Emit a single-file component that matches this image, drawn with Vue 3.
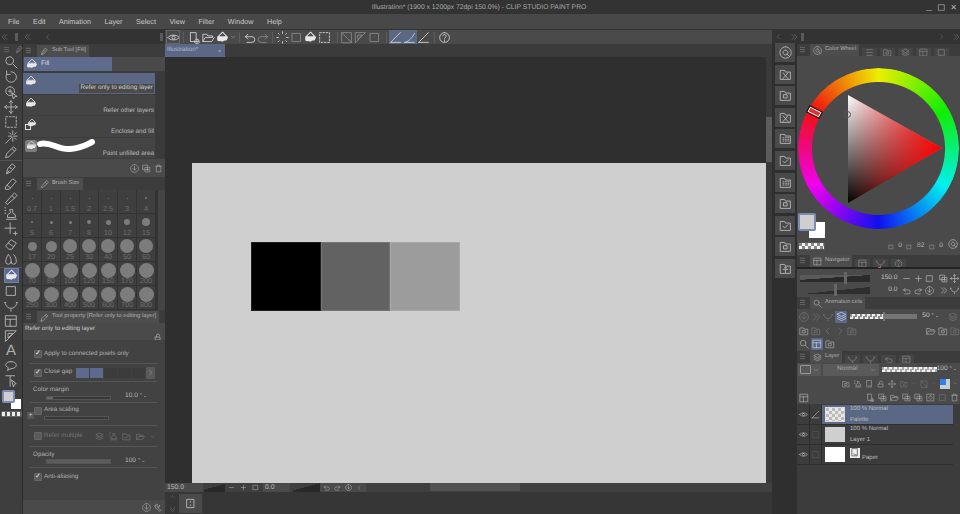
<script setup>
import { h } from 'vue'

const P = {
  zoom: 'M10 10l5 5M11 6.5a4.5 4.5 0 1 1-9 0a4.5 4.5 0 1 1 9 0',
  lasso: 'M8 2a6 6 0 1 1-5 3M3 1v4h4',
  hand: 'M7 2a5 5 0 1 0 0 10a5 5 0 1 0 0-10M7 5v4M5 7h4M9 9l6 4-3 .5-1 2.5z',
  move: 'M8 1v14M1 8h14M8 1L6 3M8 1l2 2M8 15l-2-2M8 15l2-2M1 8l2-2M1 8l2 2M15 8l-2-2M15 8l-2 2',
  marquee: 'M2 2h2M6 2h2M10 2h2M14 2v2M14 6v2M14 10v2M14 14h-2M10 14H8M6 14H4M2 14v-2M2 10V8M2 6V4',
  wand: 'M2 15l7-7M10 1v4M10 9v4M5 7h4M11 7h4M6 3l2 2M14 3l-2 2M14 11l-2-2',
  drop: 'M2 14l1-4 6-6 3 3-6 6zM9 4l2-2 3 3-2 2M2 14h0',
  pen: 'M3 13l1-5 5-6 4 3-5 6zM3 13l3-3M7 6a1 1 0 1 0 2 1',
  pencil: 'M2 11L10 2l4 3-8 9-4 0zM3.5 9.5l4 3',
  brush: 'M2 12l7-8 3 3-8 7zM9 4l3-3 3 3-3 3',
  stamp: 'M1 1h1M1 4h1M1 7h1M7 3h3v4l3 2v3H4V9l3-2zM3 14h11',
  spark: 'M7 1v12M1 7h12M13 11v4M11 13h4',
  eraser: 'M2 10l6-7 6 4-5 7H6zM5 7l6 4',
  blend: 'M5 3c3 3 3 5 3 8a3 3 0 0 1-6 0c0-3 1-5 3-8M11 3c3 3 3 5 3 8a3 3 0 0 1-6 0',
  curve: 'M1 4c2 9 12 9 14 0M1 4h1M14 4h1M8 12v2',
  frame: 'M2 2h12v12H2zM2 6h12M7 6v8',
  tri: 'M2 2h12L2 14zM5 5h5l-5 5z',
  balloon: 'M8 3c4 0 6 2 6 4s-2 4-6 4l-4 2 1-3C3 9 2 8 2 7c0-2 2-4 6-4z',
  pointer: 'M2 2h10M7 2v12M9 7l5 4-2 .5-1 3z',
  eye: 'M1 8c3-4 11-4 14 0c-3 4-11 4-14 0M8 6a2 2 0 1 1 0 4a2 2 0 1 1 0-4',
  pagePlus: 'M3 2h7v8M3 2v11h6M11 10a3 3 0 1 0 .1 0M11 11v4M9 13h4',
  folder: 'M1 13V4h5l1 2h6v2H4l-3 5h11l3-5',
  undo: 'M3 7h8a3 3 0 0 1 0 7H5M3 7l3-3M3 7l3 3',
  redo: 'M13 7H5a3 3 0 0 0 0 7h6M13 7l-3-3M13 7l-3 3',
  dotted: 'M8 1v2M8 13v2M1 8h2M13 8h2M3 3l1 1M12 12l1 1M3 13l1-1M12 4l1-1',
  square: 'M3 3h10v10H3z',
  chev: 'M4 6l4 4 4-4',
  left: 'M10 3L5 8l5 5',
  right: 'M6 3l5 5-5 5',
  dbl: 'M4 3l5 5-5 5M9 3l5 5-5 5',
  dblL: 'M12 3L7 8l5 5M7 3L2 8l5 5',
  dblD: 'M3 3l5 5 5-5M3 8l5 5 5-5',
  hatch: 'M2 2l12 12M2 14V2h12v12z',
  ruler: 'M2 14L14 2M2 14h12',
  ruler2: 'M2 14c5-1 9-5 12-11M2 14h12',
  help: 'M8 2a6 6 0 1 0 .1 0M6 6a2 2 0 1 1 3 2c-1 1-1 1-1 2M8 12v1',
  target: 'M8 1a7 7 0 1 0 .1 0M8 5a3 3 0 1 0 .1 0M10 10l3 3',
  boxX: 'M2 3h5l1 2h6v9H2zM5 6l6 7M11 6l-6 7',
  boxDoc: 'M2 3h5l1 2h6v9H2zM6 7h4v4H6z',
  boxCheck: 'M2 3h5l1 2h6v9H2zM5 9l2 2 4-4',
  boxDots: 'M2 3h5l1 2h6v9H2zM5 7h1M8 7h1M11 7h1M5 9h1M8 9h1M11 9h1M5 11h1M8 11h1M11 11h1',
  boxMan: 'M2 3h5l1 2h6v9H2zM8 6a1 1 0 1 0 .1 0M5 9h6M8 9v4',
  lines: 'M3 3h10M3 8h10M3 13h10',
  down: 'M8 1a7 7 0 1 0 .1 0M8 4v7M5 8l3 3 3-3',
  copy: 'M2 2h8v8H2zM6 6h8v8H6zM8 10h4M10 8v4',
  trash: 'M3 4h10M6 4V2h4v2M4 4v10h8V4',
  lock: 'M3 8h9v6H3zM5 8V5a3 3 0 0 1 6 0',
  wrench: 'M2 5a3 3 0 0 1 5-2L5 5l1 2 2-1 2-2c1 3-2 5-3 4l5 5-2 2-5-5C3 10 1 8 2 5z',
  layers: 'M8 2l6 3-6 3-6-3zM2 8l6 3 6-3M2 11l6 3 6-3',
  mask: 'M2 2h12v12H2zM8 5a3 3 0 1 0 .1 0',
  page: 'M4 1h9v13H4zM6 10l2 2 3 0',
  dots: 'M3 2h10v12H3zM8 5v1M8 10v1',
  minus: 'M3 8h10',
  winMin: 'M3 13h10',
  plus: 'M8 3v10M3 8h10'
}
const Ic = (props) =>
  h('svg', { width: props.s || 13, height: props.s || 13, viewBox: '0 0 16 16', fill: 'none', stroke: 'currentColor', 'stroke-width': props.w || 1.1, 'stroke-linejoin': 'round', 'stroke-linecap': 'round', class: 'ic' }, h('path', { d: P[props.n] }))
Ic.props = ['n', 's', 'w']

const Bucket = (props) =>
  h('svg', { width: props.s || 12, height: props.s || 12, viewBox: '0 0 16 16', class: 'ic' }, [
    h('path', { d: 'M8 1.5L13.5 7H2.5z', fill: 'none', stroke: '#e4e4e4', 'stroke-width': 1.3 }),
    h('path', { d: 'M1.5 7.5h13v1l-1.5 3c-1 .5-2 0-3 .5s-2 1.5-3 1-2-1-3-.5-2-.5-2.5-1z', fill: '#e8e8e8' })
  ])
Bucket.props = ['s']

const menu = ['File', 'Edit', 'Animation', 'Layer', 'Select', 'View', 'Filter', 'Window', 'Help']
const tools1 = ['zoom', 'lasso', 'hand', 'move', 'marquee', 'wand', 'drop']
const tools2 = ['pen', 'pencil', 'brush', 'stamp', 'spark', 'eraser', 'blend']
const tools3 = ['square', 'curve', 'frame', 'tri']
const subs = [
  { t: 'Refer only to editing layer', active: true },
  { t: 'Refer other layers' },
  { t: 'Enclose and fill', boxed: true },
  { t: 'Paint unfilled area', stroke: true }
]
const sizes = [
  ['0.7', 1], ['1', 1], ['1.5', 1], ['2', 1], ['2.5', 1], ['3', 1], ['4', 2],
  ['5', 2], ['6', 3], ['7', 3], ['8', 4], ['10', 5], ['12', 6], ['15', 8],
  ['17', 9], ['20', 11], ['25', 14], ['30', 14], ['40', 14], ['50', 14], ['60', 14],
  ['70', 15], ['80', 15], ['100', 15], ['120', 15], ['150', 15], ['170', 15], ['200', 15],
  ['250', 15], ['300', 15], ['400', 15], ['500', 15], ['600', 15], ['700', 15], ['800', 15]
]
const strip = ['target', 'boxX', 'boxDoc', 'boxX', 'boxDots', 'boxCheck', 'boxDots', 'boxDoc', 'boxCheck', 'boxDoc', 'boxMan']
const layers = [
  { a: '100 % Normal', b: 'Palette', sel: true, kind: 'checker' },
  { a: '100 % Normal', b: 'Layer 1', kind: 'grey' },
  { b: 'Paper', kind: 'white', paper: true }
]
</script>

<template>
  <div class="app">
    <header class="title">Illustration* (1900 x 1200px 72dpi 150.0%)  - CLIP STUDIO PAINT PRO
      <span class="win"><Ic n="winMin" :s="8" /><Ic n="square" :s="9" /><span class="x">✕</span></span>
    </header>
    <nav class="menu"><span v-for="m in menu" :key="m">{{ m }}</span></nav>

    <div class="main">
      <aside class="left">
        <div class="dock">
          <Ic n="dblL" :s="8" /><i class="grip"></i><Ic n="dblL" :s="8" /><Ic n="left" :s="8" class="push" /><i class="grip end"></i>
        </div>
        <div class="left-body">
          <div class="tools">
            <div class="tool-head"><Ic n="lines" :s="7" /><Ic n="pen" :s="9" /></div>
            <div class="tool-group">
              <span v-for="t in tools1" :key="t" class="tool"><Ic :n="t" :s="14" /></span>
            </div>
            <div class="tool-group sep">
              <span v-for="t in tools2" :key="t" class="tool"><Ic :n="t" :s="14" /></span>
            </div>
            <div class="tool-group sep">
              <span class="tool on"><Bucket :s="13" /></span>
              <span v-for="t in tools3" :key="t" class="tool"><Ic :n="t" :s="14" /></span>
              <span class="tool big">A</span>
              <span class="tool"><Ic n="balloon" :s="14" /></span>
              <span class="tool"><Ic n="pointer" :s="14" /></span>
            </div>
            <div class="colors">
              <i class="main-col"></i><i class="sub-col"></i>
            </div>
            <div class="wave"></div>
          </div>

          <div class="panels">
            <section class="sub">
              <div class="tabs"><Ic n="lines" :s="7" /><span class="tab"><Ic n="pen" :s="9" />Sub Tool [Fill]</span></div>
              <div class="group-row"><span class="group on"><Bucket :s="12" />Fill</span></div>
              <div class="sub-wrap">
                <ul class="sublist">
                  <li v-for="s in subs" :key="s.t" :class="{ on: s.active }">
                    <span v-if="s.boxed" class="boxed-ic"><Bucket :s="10" /></span>
                    <span v-else-if="s.stroke" class="paint-ic"><Bucket :s="11" /></span>
                    <Bucket v-else :s="12" />
                    <svg v-if="s.stroke" class="stroke" width="68" height="14" viewBox="0 0 68 14"><path d="M11 5c10-3 18 6 30 5s16-4 22-7" stroke="#fff" stroke-width="6" fill="none" stroke-linecap="round" /></svg>
                    <span class="sublabel">{{ s.t }}</span>
                  </li>
                </ul>
                <div class="vscroll"></div>
              </div>
              <div class="sub-foot"><Ic n="down" :s="9" /><Ic n="copy" :s="9" /><Ic n="trash" :s="9" /></div>
            </section>

            <section class="size">
              <div class="tabs"><Ic n="lines" :s="7" /><span class="tab"><Ic n="brush" :s="9" />Brush Size</span></div>
              <div class="size-wrap">
                <div class="size-grid">
                  <div v-for="c in sizes" :key="c[0]" class="cell">
                    <span class="dotbox"><i class="dot" :style="{ width: c[1] + 'px', height: c[1] + 'px' }"></i></span>
                    <span class="num">{{ c[0] }}</span>
                  </div>
                </div>
                <div class="vscroll short"></div>
              </div>
            </section>

            <section class="prop">
              <div class="tabs"><Ic n="lines" :s="7" /><span class="tab wide"><Ic n="drop" :s="9" />Tool property [Refer only to editing layer]</span></div>
              <div class="prop-head"><span>Refer only to editing layer</span><Ic n="lock" :s="8" /></div>
              <div class="prop-body">
                <div class="prow r-apply"><i class="chk on">✓</i>Apply to connected pixels only</div>
                <div class="prow r-gap"><i class="chk on">✓</i><span class="gap-label">Close gap</span>
                  <span class="gaps"><b class="b"></b><b class="b"></b><b></b><b></b><b></b><em><Ic n="right" :s="7" /></em></span>
                </div>
                <div class="pcol r-margin">
                  <span class="plabel">Color margin</span>
                  <div class="pline"><span class="track"><i></i></span><span class="val">10.0<small>⌃⌄</small></span></div>
                </div>
                <div class="prow r-area"><i class="plusb">+</i><i class="chk"></i><div class="stack"><span>Area scaling</span><span class="track"></span></div></div>
                <div class="prow r-multi"><i class="chk"></i><span class="dim multi-label">Refer multiple</span>
                  <span class="refs"><Ic n="layers" :s="9" /><Ic n="stamp" :s="9" /><Ic n="boxCheck" :s="9" /><Ic n="folder" :s="9" /><Ic n="chev" :s="7" /></span>
                </div>
                <div class="pcol r-opacity">
                  <span class="plabel">Opacity</span>
                  <div class="pline"><span class="track fillt"></span><span class="val">100<small>⌃⌄</small></span></div>
                </div>
                <div class="prow r-aa nobd"><i class="chk on">✓</i>Anti-aliasing</div>
              </div>
              <div class="prop-foot"><Ic n="down" :s="9" /><Ic n="wrench" :s="9" /></div>
            </section>
          </div>
        </div>
      </aside>

      <main class="center">
        <div class="toolbar">
          <span class="tb boxed"><Ic n="eye" /></span><i class="tsep sa"></i>
          <span class="tb"><Ic n="pagePlus" /></span><span class="tb"><Ic n="folder" /></span><span class="tb"><Bucket :s="13" /></span><span class="tb nar"><Ic n="chev" :s="6" /></span><i class="tsep sb"></i>
          <span class="tb"><Ic n="undo" /></span><span class="tb dim"><Ic n="redo" /></span><i class="tsep sc"></i>
          <span class="tb"><Ic n="dotted" /></span><span class="tb dim"><Ic n="square" /></span>
          <span class="tb"><Bucket :s="13" /></span>
          <span class="tb"><Ic n="marquee" /></span><i class="tsep sd"></i>
          <span class="tb dim"><Ic n="hatch" /></span><span class="tb dim"><Ic n="tri" /></span><span class="tb dim"><Ic n="square" /></span><i class="tsep se"></i>
          <span class="tb blue"><Ic n="ruler" /></span><span class="tb blue"><Ic n="ruler2" /></span><span class="tb"><Ic n="ruler" /></span><i class="tsep sa"></i>
          <span class="tb"><Ic n="help" /></span>
        </div>
        <div class="doc-tabs"><span class="doc-tab">Illustration*<i>●</i></span></div>
        <div class="canvas-row">
          <div class="canvas">
            <div class="paper">
              <div class="swatch s1"></div><div class="swatch s2"></div><div class="swatch s3"></div>
            </div>
          </div>
          <div class="cscroll"><i></i></div>
        </div>
        <div class="status">
          <span class="st-val">150.0</span><span class="wedge"></span>
          <span class="st-ic"><Ic n="minus" :s="7" /><Ic n="plus" :s="7" /><Ic n="square" :s="7" /></span>
          <span class="st-val two">0.0</span><span class="wedge w2"></span>
          <span class="st-ic g"><Ic n="undo" :s="7" /><Ic n="redo" :s="7" /><Ic n="down" :s="7" /><Ic n="left" :s="6" /></span>
          <span class="hbar"><i></i></span>
        </div>
        <div class="bottom">
          <span class="bscroll"><Ic n="chev" :s="7" class="flip" /><Ic n="dblD" :s="7" /></span>
          <span class="bbtn"><Ic n="dots" :s="11" /></span>
        </div>
      </main>

      <aside class="right">
        <div class="dock r">
          <Ic n="left" :s="7" /><Ic n="dbl" :s="8" class="dbl1" /><i class="grip"></i><Ic n="right" :s="7" class="push" /><Ic n="dbl" :s="8" class="dbl2" />
        </div>
        <div class="right-body">
          <div class="strip">
            <span v-for="(s, i) in strip" :key="i" class="sbtn"><Ic :n="s" :s="13" /></span>
          </div>
          <div class="rpanels">
            <section class="color">
              <div class="tabs r"><Ic n="lines" :s="7" /><span class="tab"><Ic n="target" :s="9" />Color Wheel</span>
                <span class="mini"><Ic n="lines" :s="9" /></span><span class="mini"><Ic n="boxDoc" :s="9" /></span><span class="mini"><Ic n="layers" :s="9" /></span><span class="mini"><Ic n="frame" :s="9" /></span><span class="mini"><Ic n="square" :s="9" /></span>
              </div>
              <div class="wheel-area">
                <div class="wheel"></div>
                <svg class="triangle" width="96" height="110" viewBox="0 0 96 110">
                  <defs>
                    <linearGradient id="bw" x1="0" y1="0" x2="0" y2="1"><stop offset="0" stop-color="#fff" /><stop offset="1" stop-color="#000" /></linearGradient>
                    <linearGradient id="rd" x1="0" y1="0" x2="1" y2="0"><stop offset="0" stop-color="#f00" stop-opacity="0" /><stop offset="1" stop-color="#f00" /></linearGradient>
                  </defs>
                  <path d="M1 1V109L95 54z" fill="url(#bw)" />
                  <path d="M1 1V109L95 54z" fill="url(#rd)" />
                </svg>
                <i class="hue-mark"></i><i class="sv-mark"></i>
                <div class="col-row">
                  <div class="col-sw"><i class="c1"></i><i class="c2"></i></div>
                  <i class="checker-b"></i>
                  <span class="hsv"><Ic n="square" :s="6" /> 0 <Ic n="square" :s="6" /> 82 <Ic n="square" :s="6" /> 0</span>
                  <Ic n="target" :s="10" />
                </div>
              </div>
            </section>

            <section class="nav">
              <div class="tabs r"><Ic n="lines" :s="7" /><span class="tab"><Ic n="frame" :s="9" />Navigator</span><span class="mini"><Ic n="frame" :s="9" /></span><span class="mini"><Ic n="curve" :s="9" /></span><span class="mini"><Ic n="help" :s="9" /></span></div>
              <div class="blackbar"><i></i></div>
              <div class="nrow"><span class="nslider"><i></i></span><span class="nval">150.0</span><Ic n="minus" :s="9" /><Ic n="plus" :s="9" /><Ic n="square" :s="9" /><Ic n="copy" :s="9" class="gapl" /><Ic n="move" :s="9" /></div>
              <div class="nrow"><span class="nslider two"><i></i></span><span class="nval">0.0</span><Ic n="undo" :s="9" /><Ic n="redo" :s="9" /><Ic n="down" :s="9" /><Ic n="dbl" :s="9" class="gapl" /><Ic n="curve" :s="9" /></div>
            </section>

            <section class="anim">
              <div class="tabs r"><Ic n="lines" :s="7" /><span class="tab wide2"><Ic n="zoom" :s="9" />Animation cels</span></div>
              <div class="arow one">
                <Ic n="down" :s="10" class="dim" /><Ic n="dbl" :s="10" class="dim" /><Ic n="curve" :s="10" class="dim" /><span class="ablue"><Ic n="layers" :s="11" /></span>
                <span class="checker-bar"><i></i></span><span class="aval">50<small>⌃⌄</small></span><Ic n="layers" :s="10" class="dim al" />
              </div>
              <div class="arow"><Ic n="boxDoc" :s="10" /><Ic n="boxDoc" :s="10" class="dim" /><Ic n="left" :s="10" class="dim" /><Ic n="right" :s="10" class="dim" /><Ic n="boxDoc" :s="10" class="dim" /><i class="flex"></i><Ic n="folder" :s="10" /><Ic n="boxDoc" :s="10" /><Ic n="boxDoc" :s="10" class="dim" /></div>
              <div class="arow"><Ic n="zoom" :s="10" /><span class="ablue2"><Ic n="frame" :s="10" /></span><Ic n="boxDoc" :s="10" /></div>
            </section>

            <section class="layer">
              <div class="tabs r"><Ic n="lines" :s="7" /><span class="tab small"><Ic n="layers" :s="9" />Layer</span><span class="mini"><Ic n="curve" :s="9" /></span><span class="mini"><Ic n="curve" :s="9" /></span><span class="mini"><Ic n="undo" :s="9" /></span><span class="mini"><Ic n="frame" :s="9" /></span></div>
              <div class="lrow1">
                <span class="lcolor"><i></i><Ic n="chev" :s="6" /></span>
                <span class="lsel">Normal<Ic n="chev" :s="6" /></span>
                <span class="checker-bar long"></span>
                <span class="aval">100<small>⌃⌄</small></span>
              </div>
              <div class="lrow2"><Ic n="boxDoc" :s="8" /><Ic n="stamp" :s="8" /><Ic n="page" :s="8" /><Ic n="lock" :s="8" /><Ic n="move" :s="8" /><Ic n="boxX" :s="8" class="dim" /><Ic n="chev" :s="5" class="dim" /><Ic n="hatch" :s="8" class="dim" /><Ic n="chev" :s="5" class="dim" /><span class="bluechip"><i></i></span><Ic n="chev" :s="5" /></div>
              <div class="lrow3">
                <Ic n="frame" :s="10" class="grow" />
                <Ic n="pagePlus" :s="9" /><Ic n="copy" :s="9" /><Ic n="folder" :s="9" /><Ic n="copy" :s="9" /><Ic n="copy" :s="9" /><Ic n="mask" :s="9" /><Ic n="square" :s="9" class="dim" /><Ic n="trash" :s="9" />
              </div>
              <div class="llist">
                <div v-for="l in layers" :key="l.b" class="litem" :class="{ sel: l.sel }">
                  <span class="leye"><Ic n="eye" :s="9" /></span>
                  <span class="lpen"><Ic v-if="l.sel" n="ruler" :s="9" /><i v-else class="lbox"></i></span>
                  <span class="lmain">
                    <i class="thumb" :class="l.kind"></i>
                    <span v-if="l.paper" class="paperrow"><i class="pmark"><Ic n="page" :s="9" /></i><span class="ltext2">{{ l.b }}</span></span>
                    <span v-else class="ltext"><span>{{ l.a }}</span><span>{{ l.b }}</span></span>
                  </span>
                </div>
              </div>
            </section>
          </div>
        </div>
      </aside>
    </div>
  </div>
</template>

<style>
html, body { margin: 0; background: #3c3c3c; }
</style>

<style scoped>
.app { width: 960px; height: 514px; overflow: hidden; display: flex; flex-direction: column; background: #3c3c3c; color: #b4b4b4; font: 7px/1 "Liberation Sans", Arial, sans-serif; text-rendering: geometricPrecision; }
.ic { flex: none; display: block; }
i { font-style: normal; display: block; }
.dim { opacity: .45; }
.title { height: 14px; flex: none; background: #333; color: #a8a8a8; font-size: 6.8px; line-height: 15px; text-align: center; white-space: pre; position: relative; }
.win { position: absolute; right: 3px; top: 3px; display: flex; gap: 4px; align-items: center; color: #b8b8b8; }
.win .x { font-size: 8px; line-height: 9px; }
.menu { height: 15px; flex: none; background: #484848; display: flex; align-items: center; gap: 13.5px; padding-left: 8px; font-size: 7.2px; color: #cacaca; box-sizing: border-box; }
.main { flex: 1; display: flex; min-height: 0; }

.left { width: 165px; flex: none; display: flex; flex-direction: column; }
.dock { height: 15px; flex: none; background: #333; display: flex; align-items: center; padding: 0 1px; gap: 6px; color: #777; box-sizing: border-box; }
.grip { width: 3px; height: 8px; background: #5a5a5a; }
.push { margin-left: auto; }
.left .push { margin-left: 6px; }
.left .grip.end { margin-left: auto; margin-right: 1px; }
.left-body { flex: 1; display: flex; min-height: 0; }

.tools { width: 23px; flex: none; background: #3e3e3e; display: flex; flex-direction: column; align-items: center; border-right: 1px solid #2c2c2c; box-sizing: border-box; }
.tool-head { height: 10px; width: 100%; display: flex; align-items: center; gap: 5px; padding-left: 3px; box-sizing: border-box; color: #888; flex: none; }
.tool-group { display: flex; flex-direction: column; align-items: center; width: 100%; padding-bottom: 1px; }
.tool-group.sep { border-top: 1px solid #555; }
.tool { width: 15px; height: 15px; display: flex; align-items: center; justify-content: center; color: #b0b0b0; }
.tool.on { background: #5a6a90; border: 1px solid #6f7fa5; box-sizing: border-box; }
.tool.big { font-size: 15px; line-height: 15px; }
.colors { height: 22px; width: 22px; position: relative; flex: none; }
.main-col { position: absolute; left: 2px; top: 1px; width: 9px; height: 9px; background: #cfcfcf; border: 2px solid #7d8db5; border-radius: 2px; z-index: 1; }
.sub-col { position: absolute; left: 11px; top: 10px; width: 10px; height: 10px; background: #fff; }
.wave { width: 19px; height: 4px; background: repeating-linear-gradient(90deg, #eee 0 3px, #555 3px 5px); border: 1px solid #666; border-radius: 1px; }

.panels { flex: 1; display: flex; flex-direction: column; min-width: 0; background: #3c3c3c; }
.tabs { height: 13px; flex: none; display: flex; align-items: flex-end; background: #3c3c3c; padding-left: 2px; gap: 5px; color: #999; box-sizing: border-box; }
.tabs > .ic { margin-bottom: 3px; }
.tab { height: 12px; padding: 0 3px; background: #4d4d4d; display: flex; align-items: center; gap: 3px; font-size: 5.7px; color: #b0b0b0; white-space: nowrap; }
.group-row { height: 14px; background: #4a4a4a; flex: none; }
.group { width: 88px; height: 14px; background: #5e6b8c; display: flex; align-items: center; gap: 3px; padding-left: 2px; box-sizing: border-box; color: #dcdcdc; font-size: 6.5px; margin-left: 1px; }
.sub-wrap { display: flex; padding-top: 2px; background: #3c3c3c; flex: none; }
.sublist { list-style: none; margin: 0; padding: 0; width: 132px; flex: none; }
.sublist li { height: 20.5px; margin-bottom: 1px; background: #444; position: relative; display: flex; padding: 2px 0 0 2px; box-sizing: border-box; }
.sublist li.on { background: #5a6785; }
.boxed-ic { width: 12px; height: 12px; display: flex; justify-content: flex-end; position: relative; }
.boxed-ic::before { content: ""; position: absolute; left: 0; bottom: 0; width: 6px; height: 6px; border: 1px solid #ddd; box-sizing: border-box; }
.paint-ic { width: 12px; height: 12px; background: #7c7c7c; border-radius: 2px; display: flex; align-items: center; justify-content: center; }
.stroke { position: absolute; left: 6px; top: 1px; }
.sublabel { position: absolute; right: 1px; bottom: 1px; font-size: 6.4px; color: #bcbcbc; white-space: nowrap; }
.on .sublabel { background: #4a4a4a; padding: 1px 1px 1px 2px; color: #d0d0d0; }
.vscroll { flex: 1; background: #3a3a3a; }
.sub-foot { height: 18px; flex: none; background: #4a4a4a; display: flex; justify-content: flex-end; align-items: center; gap: 3px; padding-right: 2px; color: #aaa; box-sizing: border-box; }

.size-wrap { display: flex; height: 120px; background: #333; overflow: hidden; flex: none; }
.size-grid { width: 133px; display: grid; grid-template-columns: repeat(7, 19px); grid-auto-rows: 24px; flex: none; overflow: hidden; }
.cell { background: #3f3f3f; border-right: 1px solid #333; border-bottom: 1px solid #333; display: flex; flex-direction: column; align-items: center; box-sizing: border-box; overflow: hidden; }
.dotbox { height: 14px; display: flex; align-items: center; justify-content: center; flex: none; margin-top: 1px; }
.dot { background: #7c7c7c; border-radius: 50%; flex: none; }
.num { color: #6e6e6e; font-size: 7.2px; line-height: 8px; position: relative; }
.vscroll.short { background: #444; border-left: 2px solid #333; }

.prop { flex: 1; display: flex; flex-direction: column; min-height: 0; background: #4a4a4a; }
.tab.wide { font-size: 5.8px; }
.prop-head { height: 17px; flex: none; display: flex; justify-content: space-between; align-items: flex-start; padding: 3px 3px 0 2px; box-sizing: border-box; font-size: 6.2px; color: #cacaca; }
.prop-head .ic { margin-top: 7px; }
.prop-body { flex: 1; background: #424242; padding: 5px 8px 0 7px; font-size: 6.3px; color: #b0b0b0; white-space: nowrap; }
.prow, .pcol { border-bottom: 1.5px solid #555; box-sizing: border-box; }
.prow { display: flex; align-items: center; gap: 2px; position: relative; padding-left: 4px; }
.pcol { display: flex; flex-direction: column; padding: 4px 0 0 3px; }
.r-apply { height: 19px; } .r-gap { height: 18px; } .r-margin { height: 21px; } .r-area { height: 23px; } .r-multi { height: 21px; } .r-opacity { height: 21px; } .r-aa { height: 18px; }
.nobd { border: 0; }
.chk { width: 6px; height: 6px; background: #5a5a5a; border: 1px solid #666; border-radius: 1px; color: #eee; font-size: 7px; line-height: 6px; text-align: center; flex: none; }
.gap-label { width: 30px; flex: none; }
.gaps { display: flex; gap: 1px; height: 10px; }
.gaps b { width: 13px; height: 10px; background: #3c3c3c; display: block; }
.gaps b.b { background: #5c6a8e; }
.gaps em { width: 9px; height: 12px; margin-top: -1px; display: flex; align-items: center; justify-content: center; background: #5a5a5a; border-radius: 1px; }
.plabel { line-height: 8px; }
.pline { display: flex; align-items: center; gap: 14px; margin-top: -1px; }
.track { display: block; width: 63px; height: 2px; background: #383838; border: 1px solid #555; }
.track i { width: 6px; height: 2px; background: #666; }
.fillt { background: #5c5c5c; height: 3px; margin-left: 13px; margin-top: 1px; }
.pcol .track:not(.fillt) { margin-left: 13px; margin-top: 3px; }
.val { font-size: 6.6px; color: #b8b8b8; display: flex; align-items: center; gap: 1px; }
.val small { font-size: 5px; }
.r-area { align-items: flex-start; padding-top: 4px; }
.plusb { position: absolute; left: -3px; top: 9px; width: 7px; height: 7px; background: #555; font-size: 7px; line-height: 7px; text-align: center; color: #ccc; }
.stack { display: flex; flex-direction: column; gap: 3px; }
.multi-label { width: 49px; flex: none; }
.refs { display: flex; gap: 4.5px; align-items: center; color: #767676; }
.prop-foot { height: 14px; flex: none; background: #4a4a4a; display: flex; justify-content: flex-end; gap: 3px; align-items: center; padding-right: 2px; color: #aaa; }

.center { flex: 1; display: flex; flex-direction: column; min-width: 0; }
.toolbar { height: 15px; flex: none; background: #4a4a4a; border-top: 1px solid #333; box-sizing: border-box; display: flex; align-items: center; color: #cfcfcf; }
.tb { width: 14px; height: 14px; display: flex; align-items: center; justify-content: center; flex: none; }
.tb.nar { width: 8px; }
.tb.boxed { width: 14px; margin-left: 1px; border: 1px solid #666; box-sizing: border-box; }
.tb.blue { background: #5a6785; }
.tsep { width: 1px; height: 11px; background: #5c5c5c; flex: none; }
.sa { margin: 0 3px; }
.sb { margin: 0 2px; }
.sc { margin: 0 2.5px 0 1.5px; }
.sd { margin: 0 1.5px 0 5.5px; }
.se { margin: 0 1.5px 0 5px; }
.doc-tabs { height: 13px; flex: none; background: #3b3b3b; }
.doc-tab { display: flex; align-items: center; justify-content: space-between; width: 60px; height: 13px; background: #5c6785; color: #b0b8cc; font-size: 6.3px; padding: 0 4px 0 2px; box-sizing: border-box; }
.doc-tab i { font-size: 4px; }
.canvas-row { flex: 1; display: flex; min-height: 0; }
.canvas { flex: 1; background: #2f2f2f; padding: 106px 0 0 27px; min-width: 0; box-sizing: border-box; }
.paper { height: 100%; background: #cfcfcf; display: flex; padding: 79px 0 0 59px; box-sizing: border-box; align-items: flex-start; }
.swatch { width: 70px; height: 69px; box-shadow: inset 0 0 0 1px rgba(255,255,255,.12); }
.s1 { background: #000; } .s2 { background: #626262; width: 69px; } .s3 { background: #9c9c9c; }
.cscroll { width: 6px; background: #3a3a3a; padding-top: 60px; flex: none; box-sizing: border-box; }
.cscroll i { height: 45px; background: #5c5c5c; }
.status { height: 9px; flex: none; background: #3f3f3f; display: flex; align-items: center; font-size: 6.8px; color: #b8b8b8; }
.st-val { width: 38px; background: #4a4a4a; height: 9px; padding-left: 2px; box-sizing: border-box; line-height: 9px; flex: none; }
.st-val.two { width: 27px; }
.wedge { width: 21px; height: 9px; background: linear-gradient(165deg, #3f3f3f 45%, #2a2a2a 46%); margin-left: 1px; flex: none; }
.wedge.w2 { width: 27px; margin-left: 3px; }
.st-ic { display: flex; gap: 5px; padding: 0 4px 0 3px; flex: none; }
.st-ic.g { gap: 4px; background: #4a4a4a; height: 9px; align-items: center; }
.hbar { flex: 1; height: 9px; background: #404040; padding-left: 64px; box-sizing: border-box; }
.hbar i { width: 90px; height: 8px; background: #515151; }
.bottom { height: 22px; flex: none; background: #363636; display: flex; align-items: center; color: #777; }
.bscroll { width: 14px; display: flex; flex-direction: column; justify-content: space-between; align-items: center; height: 20px; flex: none; }
.flip { transform: scaleY(-1); }
.bbtn { width: 23px; height: 19px; background: #4a4a4a; display: flex; align-items: center; justify-content: center; color: #ccc; flex: none; }

.right { width: 188px; flex: none; display: flex; flex-direction: column; }
.dock.r { color: #777; gap: 0; padding: 0 0 0 3px; }
.dbl1 { margin-left: 8px; }
.dock.r .grip { margin-left: 3px; }
.dbl2 { margin-left: 7px; }
.right-body { flex: 1; display: flex; min-height: 0; }
.strip { width: 25px; flex: none; background: #2f2f2f; display: flex; flex-direction: column; padding: 0 2px; box-sizing: border-box; gap: 2.5px; margin-top: -1px; }
.sbtn { height: 19.1px; width: 20px; margin-left: 1px; background: #4a4a4a; display: flex; align-items: center; justify-content: center; color: #b8b8b8; flex: none; }
.rpanels { flex: 1; display: flex; flex-direction: column; background: #3c3c3c; min-width: 0; }
.tabs.r { height: 12px; gap: 2px; }
.tabs.r > .ic { margin-right: 2px; }
.mini { width: 15px; height: 8px; background: #454545; margin-left: 1px; display: flex; justify-content: center; align-items: center; overflow: hidden; color: #8c8c8c; }
.color { height: 211px; flex: none; }
.wheel-area { height: 199px; background: #4a4a4a; position: relative; }
.wheel { position: absolute; left: 1px; top: 12px; width: 161px; height: 161px; border-radius: 50%; background: conic-gradient(#eeee00, #10ee00 60deg, #00f0f0 120deg, #1010ee 180deg, #f000f0 240deg, #f01010 300deg, #eeee00 360deg); -webkit-mask: radial-gradient(circle, transparent 66px, #000 67px); mask: radial-gradient(circle, transparent 66px, #000 67px); }
.triangle { position: absolute; left: 50px; top: 38px; }
.hue-mark { position: absolute; left: 11px; top: 53px; width: 11px; height: 4px; background: #d33; border: 1px solid #fff; outline: 1px solid #111; transform: rotate(27deg); }
.sv-mark { position: absolute; left: 47px; top: 55px; width: 5px; height: 5px; border: 1px solid #555; border-radius: 50%; }
.col-row { position: absolute; left: 1px; right: 2px; top: 157px; height: 37px; display: flex; align-items: flex-end; }
.col-sw { position: absolute; left: 0; top: 0; width: 30px; height: 26px; }
.c1 { position: absolute; left: 0; top: 0; width: 14px; height: 14px; background: #cfcfcf; border: 2px solid #7a8ab2; border-radius: 2px; z-index: 1; }
.c2 { position: absolute; left: 11px; top: 9px; width: 16px; height: 16px; background: #fff; }
.checker-b { width: 25px; height: 6px; background: repeating-conic-gradient(#f2f2f2 0 25%, #888 0 50%) 0 0 / 6px 6px; border: 1px solid #555; }
.hsv { margin-left: auto; margin-right: 5px; display: flex; align-items: center; gap: 4.5px; font-size: 6.6px; color: #b8b8b8; }
.col-row > .ic { margin-bottom: 1px; }

.nav { height: 42px; flex: none; display: flex; flex-direction: column; background: #4a4a4a; }
.blackbar { height: 2px; background: #222; flex: none; margin-bottom: 3px; }
.blackbar i { width: 3px; height: 1px; background: #f44; margin-left: 81px; }
.nrow { height: 12px; display: flex; align-items: center; gap: 2.5px; font-size: 6.6px; color: #c0c0c0; padding-left: 3px; flex: none; }
.gapl { margin-left: 2px; }
.nslider { width: 70px; height: 7px; background: linear-gradient(176deg, #5a5a5a 40%, #2a2a2a 42%); position: relative; flex: none; }
.nslider.two { background: linear-gradient(174deg, #4a4a4a 50%, #2e2e2e 52%); }
.nslider i { width: 3px; height: 12px; background: #666; position: absolute; left: 44px; top: -3px; }
.nslider.two i { left: 34px; }
.nval { width: 25px; text-align: right; flex: none; margin-right: 2px; }

.anim { height: 54px; flex: none; background: #4a4a4a; display: flex; flex-direction: column; color: #aaa; }
.arow { height: 13.5px; display: flex; align-items: center; gap: 2px; padding-left: 2px; flex: none; }
.arow.one { height: 15px; }
.flex { flex: 1; }
.al { margin-left: 7px; }
.ablue, .ablue2 { width: 12px; height: 12px; background: #5a6785; display: flex; align-items: center; justify-content: center; color: #c8d0e2; flex: none; }
.checker-bar { width: 67px; height: 5px; margin-left: 1px; display: block; background: linear-gradient(90deg, transparent 0 50%, #757575 50%), repeating-conic-gradient(#eee 0 25%, #8a8a8a 0 50%) 0 0 / 5px 5px; position: relative; flex: none; }
.checker-bar.long { width: 55px; background: repeating-conic-gradient(#eee 0 25%, #aaa 0 50%) 0 0 / 5px 5px; margin-left: 3px; }
.checker-bar i { position: absolute; left: 33px; top: -2px; width: 2px; height: 9px; background: #777; }
.aval { width: 20px; display: flex; justify-content: flex-end; align-items: center; font-size: 6.6px; color: #c0c0c0; flex: none; gap: 1px; }
.aval small { font-size: 5px; }

.layer { flex: 1; min-height: 0; display: flex; flex-direction: column; }
.lrow1 { height: 13px; display: flex; align-items: center; background: #4a4a4a; flex: none; padding-left: 1px; }
.lcolor { width: 23px; height: 12px; background: #585858; display: flex; align-items: center; gap: 2px; padding-left: 2px; box-sizing: border-box; }
.lcolor i { width: 9px; height: 7px; border: 1px solid #999; border-radius: 1px; }
.lsel { width: 56px; height: 12px; margin-left: 2px; background: #5a5a5a; display: flex; align-items: center; justify-content: space-between; padding: 0 3px 0 14px; box-sizing: border-box; font-size: 6.4px; color: #aaa; }
.lrow2 { height: 15px; background: #4a4a4a; display: flex; align-items: center; justify-content: flex-end; gap: 3.5px; color: #aaa; flex: none; padding-right: 2px; }
.bluechip { width: 10px; height: 10px; background: #ccc; display: block; flex: none; }
.bluechip i { width: 6px; height: 6px; background: #2e80ef; }
.lrow3 { height: 13px; background: #4a4a4a; display: flex; align-items: center; gap: 3px; color: #aaa; padding: 0 1px 0 2px; flex: none; }
.grow { margin-right: auto; }
.llist { padding-top: 1px; }
.litem { height: 20px; display: flex; border-bottom: 1px solid #2e2e2e; width: 156px; box-sizing: border-box; }
.leye { width: 12px; display: flex; align-items: center; justify-content: center; color: #bbb; border-right: 1px solid #2c2c2c; flex: none; }
.lpen { width: 11px; display: flex; align-items: center; justify-content: center; color: #bbb; border-right: 1px solid #2c2c2c; flex: none; }
.lbox { width: 5px; height: 5px; border: 1px solid #4a4a4a; }
.lmain { flex: 1; display: flex; align-items: center; gap: 5px; padding-left: 3px; min-width: 0; }
.sel .lmain { background: #5a6785; }
.thumb { width: 20px; height: 15px; flex: none; }
.thumb.checker { border: 1px solid #ddd; background: repeating-conic-gradient(#e8e8e8 0 25%, #bbb 0 50%) 0 0 / 6px 6px; box-sizing: border-box; }
.thumb.grey { background: #cfcfcf; }
.thumb.white { background: #fff; }
.ltext { display: flex; flex-direction: column; gap: 5px; font-size: 6px; color: #bcbcbc; }
.paperrow { display: flex; align-items: flex-end; gap: 2px; }
.pmark { width: 10px; height: 10px; background: #eee; color: #333; margin-bottom: 3px; }
.ltext2 { font-size: 6px; color: #bcbcbc; }
</style>
